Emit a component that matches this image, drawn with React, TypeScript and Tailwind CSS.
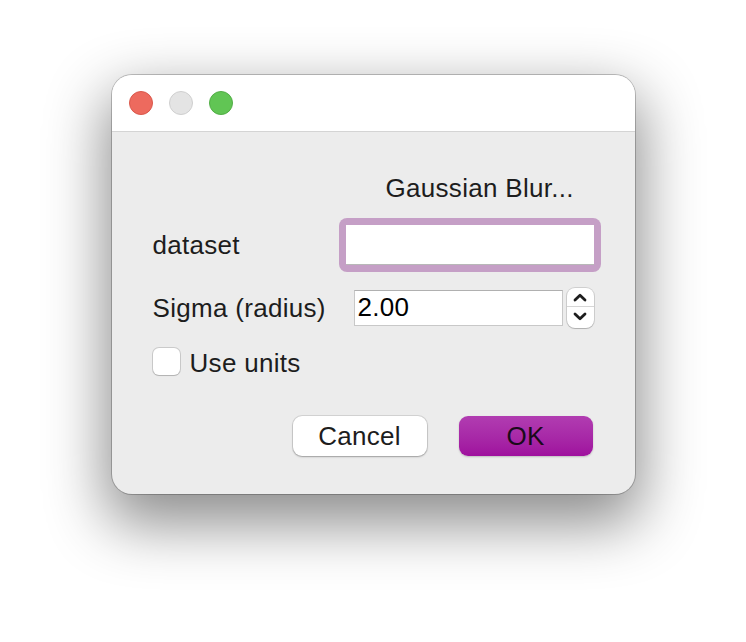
import { useState } from 'react';

const font = { fontFamily: '"Liberation Sans", Arial, sans-serif' };

function Stepper() {
  return (
    <div className="w-[27px] h-[40px] rounded-[8px] bg-white shadow-[0_0_0_1px_rgba(0,0,0,0.12),0_1px_1px_rgba(0,0,0,0.15)] flex flex-col overflow-hidden">
      <div className="h-[19px] flex items-center justify-center border-b border-[#d6d6d6] pt-[1px]">
        <svg width="14" height="9" viewBox="0 0 14 9">
          <path d="M2 7 L7 2.2 L12 7" fill="none" stroke="#1e1e1e" strokeWidth="2.8" strokeLinecap="round" strokeLinejoin="round" />
        </svg>
      </div>
      <div className="flex-1 flex items-center justify-center pb-[1px]">
        <svg width="14" height="9" viewBox="0 0 14 9">
          <path d="M2 2 L7 6.8 L12 2" fill="none" stroke="#1e1e1e" strokeWidth="2.8" strokeLinecap="round" strokeLinejoin="round" />
        </svg>
      </div>
    </div>
  );
}

export default function App() {
  const [sigma, setSigma] = useState('2.00');
  const [units, setUnits] = useState(false);

  return (
    <div className="min-h-[642px] w-full bg-white flex justify-center pt-[75px]" style={font}>
      <div className="w-[523px] h-[419px] rounded-[20px] overflow-hidden bg-[#ececec] flex flex-col shadow-[0_0_0_1px_rgba(0,0,0,0.22),0_24px_60px_6px_rgba(0,0,0,0.45)]">
        {/* title bar */}
        <div className="h-[57px] bg-white border-b border-[#d4d4d4] flex items-center gap-[16px] pl-[17px]">
          <span className="w-[24px] h-[24px] rounded-full bg-[#ed6a5e] border border-[#d9584c]" />
          <span className="w-[24px] h-[24px] rounded-full bg-[#e4e4e4] border border-[#cfcfcf]" />
          <span className="w-[24px] h-[24px] rounded-full bg-[#61c554] border border-[#52ad46]" />
        </div>

        {/* body */}
        <div className="flex flex-col px-[41px] pt-[41px] text-[26px] leading-[30px] tracking-[0.3px] text-[#1d1d1d]">
          <div className="pl-[233px] h-[30px] whitespace-nowrap">Gaussian Blur...</div>

          <div className="mt-[15px] flex items-center h-[54px]">
            <span className="w-[186px] shrink-0">dataset</span>
            <div className="w-[262px] h-[54px] shrink-0 rounded-[8px] bg-[#c59fc6] p-[7px]">
              <div className="w-full h-full bg-white border-b border-[#b8b8b8]" />
            </div>
          </div>

          <div className="mt-[15px] flex items-center h-[41px]">
            <span className="w-[201px] shrink-0 whitespace-nowrap">Sigma (radius)</span>
            <input
              value={sigma}
              onChange={(e) => setSigma(e.target.value)}
              className="w-[209px] h-[36px] shrink-0 bg-white border border-[#c8c8c8] border-t-[#b0b0b0] px-[3px] text-[26px] leading-[30px] tracking-[0.3px] text-black outline-none"
              style={font}
            />
            <div className="ml-[4px] shrink-0">
              <Stepper />
            </div>
          </div>

          <label className="mt-[20px] flex items-center h-[27px] cursor-default">
            <span
              onClick={() => setUnits(!units)}
              className="w-[27px] h-[27px] rounded-[6px] bg-white shadow-[0_0_0_1px_rgba(0,0,0,0.14),0_1px_1px_rgba(0,0,0,0.12)] flex items-center justify-center text-[18px]"
            >
              {units ? '✓' : ''}
            </span>
            <span className="ml-[10px] text-[#1d1d1d] relative top-[1px]">Use units</span>
          </label>

          <div className="mt-[41px] flex justify-end gap-[32px] pr-[1px]">
            <button className="w-[134px] h-[40px] rounded-[9px] bg-white text-[#1d1d1d] text-[26px] leading-[30px] shadow-[0_0_0_1px_rgba(0,0,0,0.1),0_1px_2px_rgba(0,0,0,0.25)]" style={font}>
              Cancel
            </button>
            <button className="w-[134px] h-[40px] rounded-[9px] bg-gradient-to-b from-[#b13cb1] to-[#9f109e] text-[#1a0a1a] text-[26px] leading-[30px] shadow-[0_1px_2px_rgba(0,0,0,0.2)]" style={font}>
              OK
            </button>
          </div>
        </div>
      </div>
    </div>
  );
}
